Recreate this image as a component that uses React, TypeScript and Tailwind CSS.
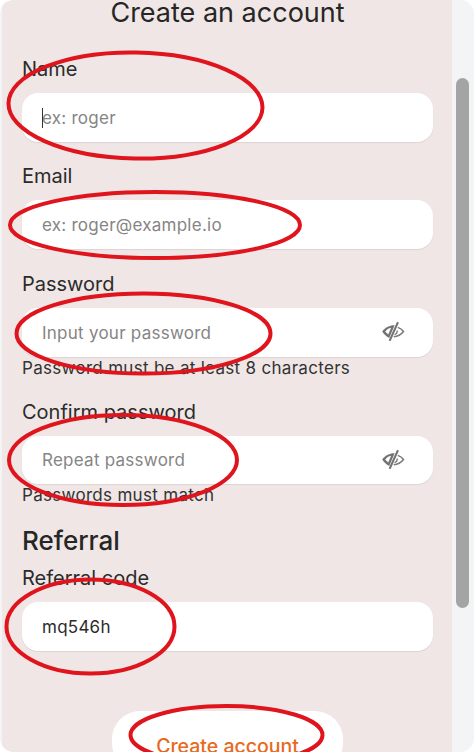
import React from 'react'

function EyeOff() {
  return (
    <svg width="24" height="20" viewBox="0 0 24 20" fill="none" className="shrink-0">
      <path
        fillRule="evenodd"
        d="M1.200 9.500C4 5.700 8.200 3.300 13.600 3.300L8.200 16C5.300 14.800 3 12.200 1.200 9.500zM4.200 9.500c.9 1.100 2 2.200 3 2.900l2.900-6.600C7.600 6.300 5.700 7.600 4.200 9.500z"
        fill="#737373"
      />
      <path d="M16.600 1 9 18" stroke="#737373" strokeWidth="2" strokeLinecap="round" />
      <path d="M16.800 5.400c2.300.8 4.300 2.200 5.700 4.100-2.300 3-5.700 5-9.800 5.200" stroke="#7a7a7a" strokeWidth="1.500" />
      <path d="M16 8.500c.4 1.900-.6 3.500-2.400 4.100" stroke="#7a7a7a" strokeWidth="1.400" />
    </svg>
  )
}

function Field({ label, placeholder, value, hint, secret, caret, className = '' }: {
  label: string
  placeholder?: string
  value?: string
  hint?: string
  secret?: boolean
  caret?: boolean
  className?: string
}) {
  return (
    <div className={className}>
      <div className="text-[20px] leading-[24px] text-[#2b2b2b]">{label}</div>
      <div className="relative mt-[12px] flex h-[48.700px] items-center rounded-[16px] bg-white pl-[20px] pr-[28px] shadow-[0_1px_1px_rgba(0,0,0,0.08)]">
        <input
          readOnly
          placeholder={placeholder}
          value={value}
          className="min-w-0 flex-1 bg-transparent pt-[2px] text-[17px] tracking-[0.25px] text-[#2b2b2b] outline-none placeholder:text-[#858585]"
        />
        {caret && <span className="absolute left-[20px] top-[15px] h-[20px] w-[1px] bg-[#333]" />}
        {secret && <EyeOff />}
      </div>
      {hint && <div className="mt-[1px] text-[17px] leading-[20px] tracking-[0.3px] text-[#333]">{hint}</div>}
    </div>
  )
}

export default function App() {
  return (
    <div className="relative flex h-[752px] w-[474px] overflow-hidden rounded-[14px] bg-[#f3f4f5] font-['Inter',sans-serif]">
      <div className="ml-[2px] flex h-full w-[450px] flex-col bg-[#efe6e5] pl-[20px] pr-[19px]">
        <h1 className="-mt-[3px] text-center text-[27px] leading-[32px] font-normal text-[#262626]">Create an account</h1>
        <Field className="mt-[28.300px]" label="Name" placeholder="ex: roger" caret />
        <Field className="mt-[22px]" label="Email" placeholder="ex: roger@example.io" />
        <Field className="mt-[23.300px]" label="Password" placeholder="Input your password" hint="Password must be at least 8 characters" secret />
        <Field className="mt-[22.100px]" label="Confirm password" placeholder="Repeat password" hint="Passwords must match" secret />
        <h2 className="mt-[19.500px] text-[26px] leading-[32px] font-medium text-[#262626]">Referral</h2>
        <Field className="mt-[9.300px]" label="Referral code" value="mq546h" />
        <button className="mx-auto mt-[60px] h-[60px] w-[231px] shrink-0 rounded-[28px] bg-white pt-[12px] text-[19.500px] font-medium text-[#e8691e]">
          Create account
        </button>
      </div>

      {/* scrollbar */}
      <div className="absolute left-[456px] top-[78px] h-[530px] w-[13px] rounded-full bg-[#a3a5a5]" />

      {/* red marker circles drawn over the form */}
      <svg className="absolute inset-0" width="474" height="752" fill="none" stroke="#e0141c" strokeWidth="4">
        <ellipse cx="135.500" cy="105.500" rx="127" ry="53" transform="rotate(1 135 105)" />
        <ellipse cx="155" cy="225" rx="145" ry="33" />
        <ellipse cx="143.500" cy="333.500" rx="127" ry="40" />
        <ellipse cx="123" cy="460" rx="114" ry="45" />
        <ellipse cx="90.500" cy="626.500" rx="84" ry="47" />
        <ellipse cx="226.500" cy="735" rx="96" ry="29" />
      </svg>
    </div>
  )
}
